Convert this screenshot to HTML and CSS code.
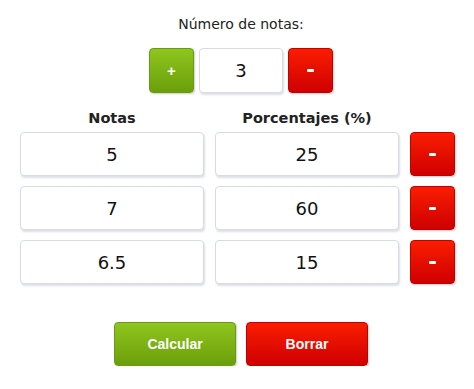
FILE: index.html
```html
<!DOCTYPE html>
<html lang="es">
<head>
<meta charset="utf-8">
<link rel="stylesheet" href="styles.css">
</head>
<body>
<div class="wrap">
  <div class="title">Número de notas:</div>
  <div class="count">
    <button class="btn green sq">+</button>
    <div class="field count-field">3</div>
    <button class="btn red sq"><span class="bar"></span></button>
  </div>
  <div class="grid">
    <div class="head">Notas</div>
    <div class="head">Porcentajes (%)</div>
    <div></div>
    <div class="field">5</div>
    <div class="field">25</div>
    <button class="btn red sq"><span class="bar"></span></button>
    <div class="field">7</div>
    <div class="field">60</div>
    <button class="btn red sq"><span class="bar"></span></button>
    <div class="field">6.5</div>
    <div class="field">15</div>
    <button class="btn red sq"><span class="bar"></span></button>
  </div>
  <div class="actions">
    <button class="btn green wide">Calcular</button>
    <button class="btn red wide">Borrar</button>
  </div>
</div>
</body>
</html>
```

FILE: styles.css
```css
html, body {
  margin: 0;
  padding: 0;
  background: #ffffff;
}
body {
  font-family: "DejaVu Sans", Verdana, sans-serif;
  color: #1a1a1a;
}
.wrap {
  margin-left: 20px;
  width: 442px;
  display: flex;
  flex-direction: column;
}
.title {
  padding-top: 14px;
  line-height: 20px;
  font-size: 14px;
  text-align: center;
  color: #222;
}
.count {
  margin-top: 14px;
  display: flex;
  justify-content: center;
  gap: 5px;
  height: 45px;
}
.field {
  box-sizing: border-box;
  background: #fff;
  border: 1px solid #d6dbe4;
  border-radius: 4px;
  box-shadow: 1px 2px 2px rgba(120, 130, 150, 0.25);
  display: flex;
  align-items: center;
  justify-content: center;
  font-size: 18px;
  color: #111;
  height: 44px;
}
.count-field {
  width: 84px;
  height: 45px;
}
.btn {
  box-sizing: border-box;
  border: none;
  border-radius: 4px;
  color: #fff;
  font-family: "Liberation Sans", Arial, sans-serif;
  font-weight: bold;
  padding: 0;
  display: flex;
  align-items: center;
  justify-content: center;
  box-shadow: 1px 1px 2px rgba(0, 0, 0, 0.2);
}
.bar {
  display: block;
  width: 7px;
  height: 3px;
  background: #fff;
  border-radius: 1px;
}
.green {
  background: linear-gradient(#8fc51f, #6b9f0b);
  border: 1px solid #6a9a12;
}
.red {
  background: linear-gradient(#fa1d00, #cf0000);
  border: 1px solid #c20000;
}
.sq {
  width: 45px;
  height: 45px;
  font-size: 15px;
}
.grid .sq {
  height: 44px;
}
.grid {
  margin-top: 15px;
  display: grid;
  grid-template-columns: 184px 184px 45px;
  column-gap: 11px;
  row-gap: 10px;
}
.head {
  font-weight: bold;
  font-size: 14.5px;
  line-height: 20px;
  text-align: center;
  color: #222;
  margin-bottom: -6px;
}
.actions {
  margin-top: 38px;
  display: flex;
  justify-content: center;
  gap: 10px;
}
.wide {
  width: 122px;
  height: 44px;
  font-size: 14px;
}
```
